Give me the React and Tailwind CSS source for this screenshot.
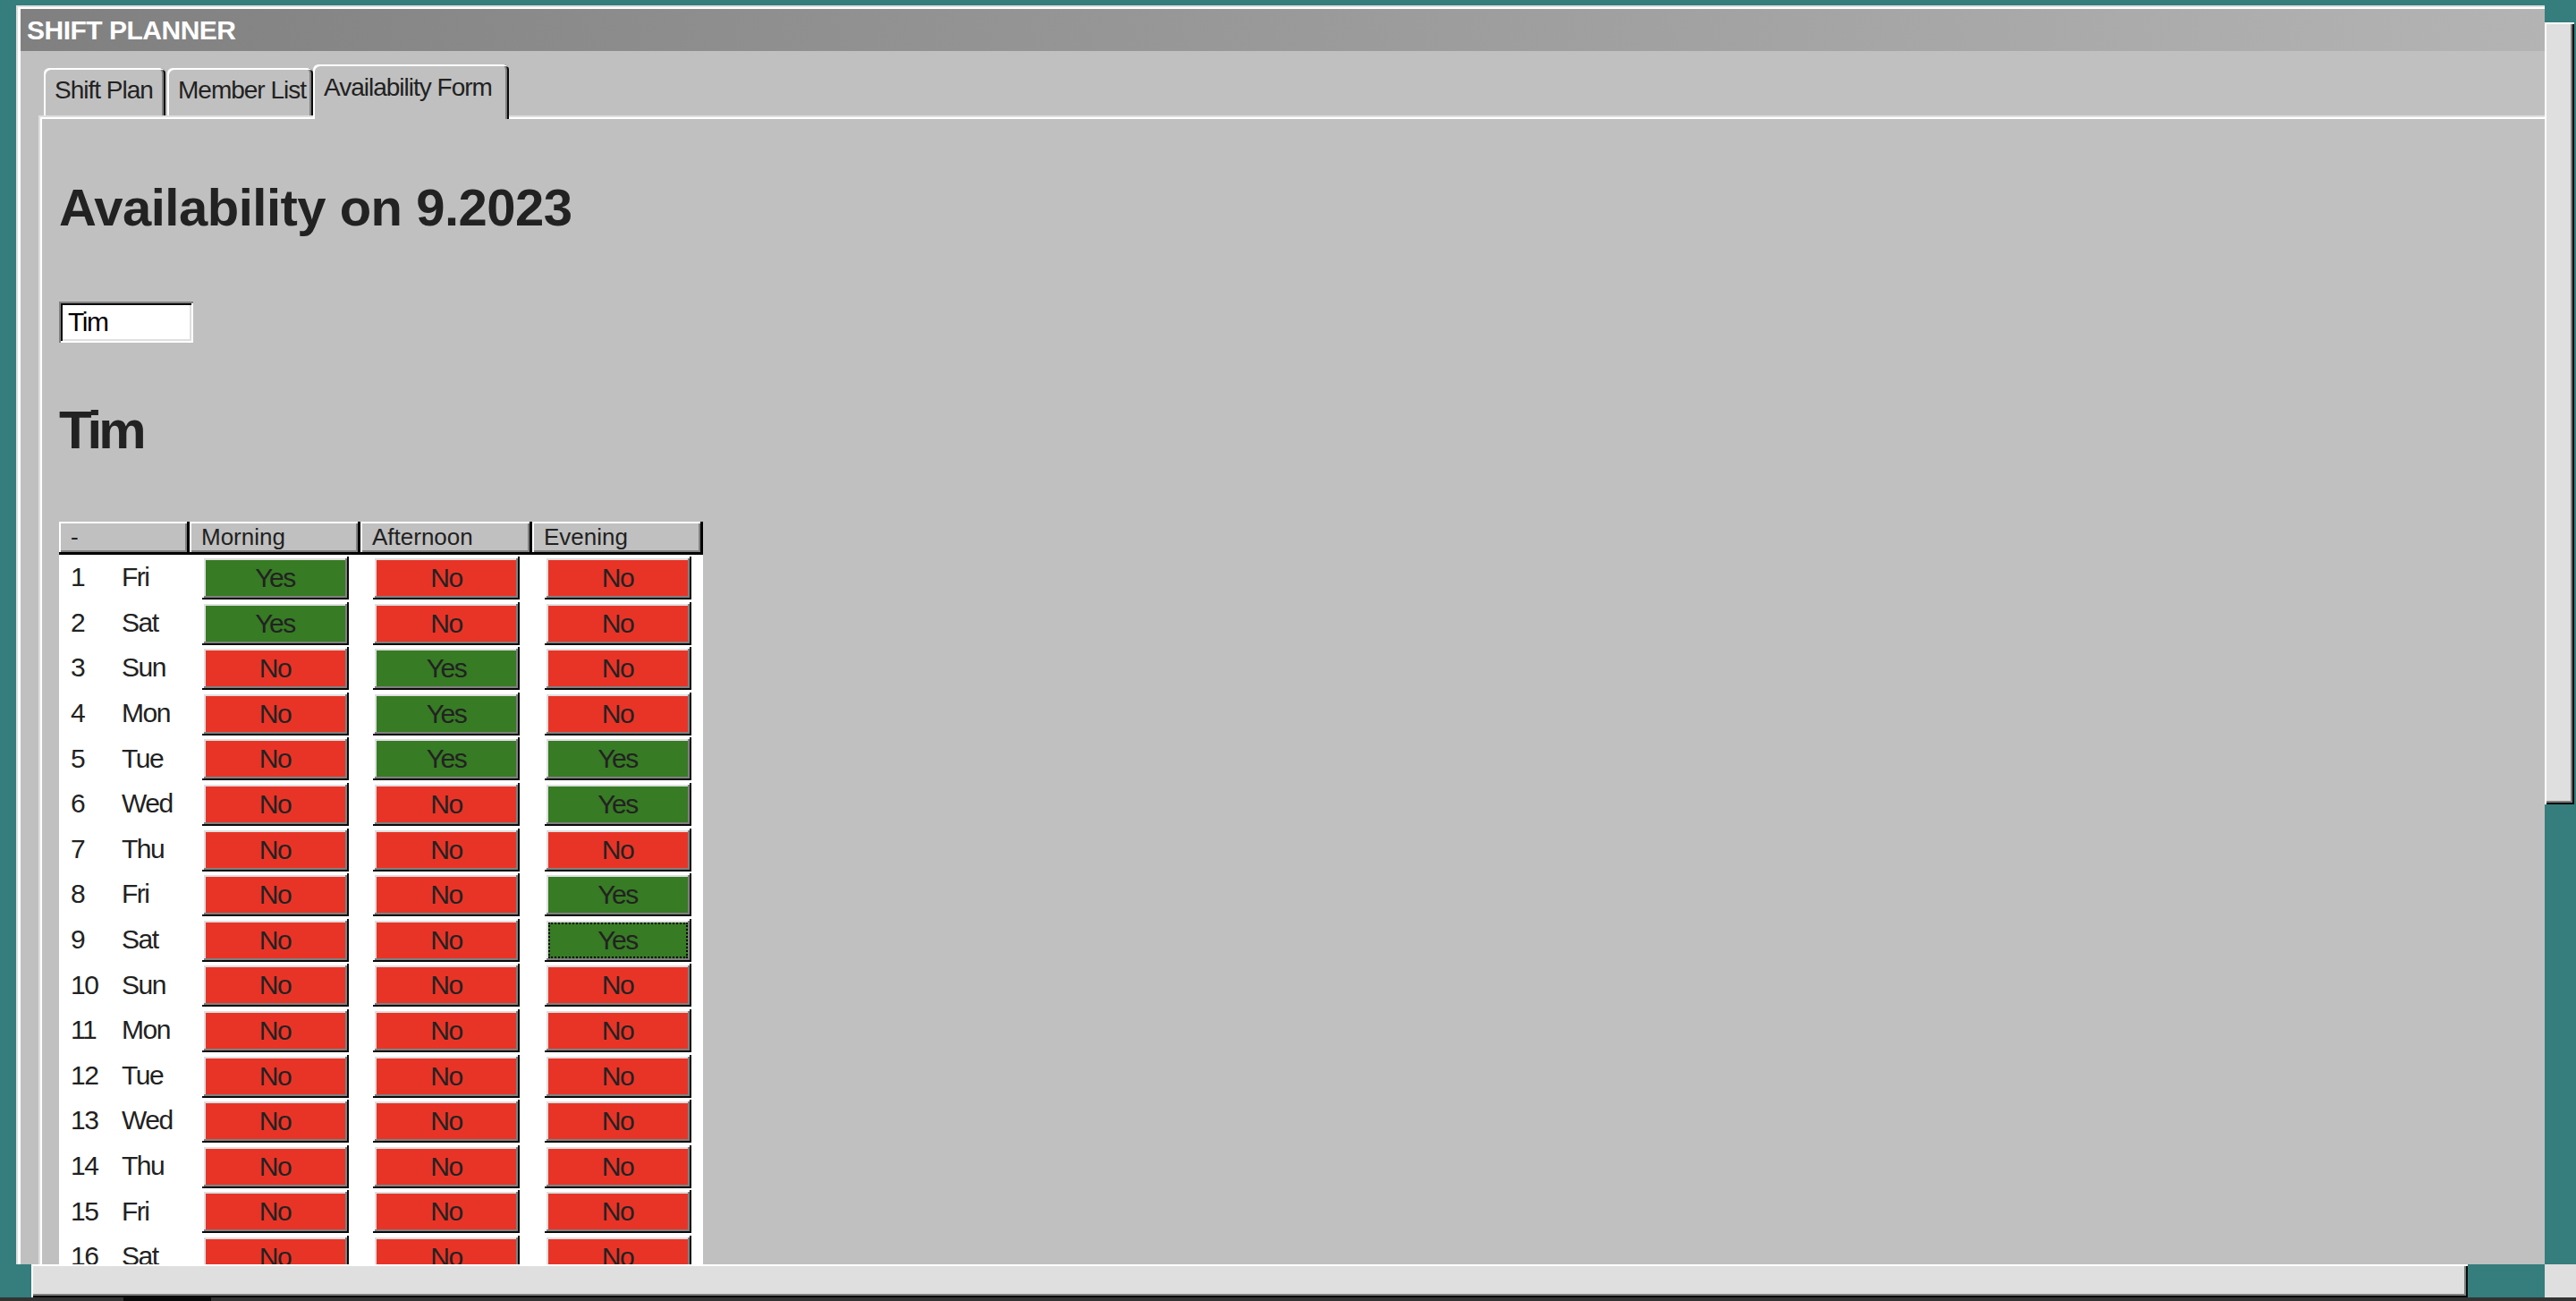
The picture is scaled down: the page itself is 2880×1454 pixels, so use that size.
import { useState } from 'react';

const DAYS = ['Sun', 'Mon', 'Tue', 'Wed', 'Thu', 'Fri', 'Sat'];

// 1 = yes, 0 = no  (morning, afternoon, evening)
const AVAIL = {
  1: [1, 0, 0],
  2: [1, 0, 0],
  3: [0, 1, 0],
  4: [0, 1, 0],
  5: [0, 1, 1],
  6: [0, 0, 1],
  8: [0, 0, 1],
  9: [0, 0, 1],
};

// only the rows that fit in the visible window
const VISIBLE_DAYS = 16;

const bevel =
  'shadow-[inset_-2px_-2px_0_#0a0a0a,inset_2px_2px_0_#fff,inset_-4px_-4px_0_#808080,inset_4px_4px_0_#dfdfdf]';

function SlotButton({ yes, focused, onClick }) {
  return (
    <button
      type="button"
      onClick={onClick}
      className={`flex h-[48px] w-[164px] items-center justify-center text-[30px] leading-none tracking-[-1.5px] text-[#222] ${bevel} ${
        yes ? 'bg-[#377b24]' : 'bg-[#e83427]'
      } ${focused ? 'outline-2 outline-dotted outline-black outline-offset-[-6px]' : 'outline-none'}`}
    >
      {yes ? 'Yes' : 'No'}
    </button>
  );
}

function Tab({ label, active, width }) {
  if (active) {
    return (
      <div
        className={`relative z-10 -mb-[4px] h-[61px] ${width} rounded-t-[6px] bg-[#c0c0c0] pl-[12px] pt-[12px] text-[28px] leading-none tracking-[-1px] shadow-[inset_2px_2px_0_#fff,inset_-2px_0_0_#0a0a0a,inset_-4px_0_0_#808080]`}
      >
        {label}
      </div>
    );
  }
  return (
    <div
      className={`h-[53px] ${width} rounded-t-[6px] bg-[#c0c0c0] pl-[12px] pt-[11px] text-[28px] leading-none tracking-[-1px] shadow-[inset_2px_2px_0_#fff,inset_-2px_0_0_#0a0a0a,inset_-4px_0_0_#808080]`}
    >
      {label}
    </div>
  );
}

function AvailabilityTable() {
  const [slots, setSlots] = useState(() =>
    Array.from({ length: VISIBLE_DAYS }, (_, i) => AVAIL[i + 1] || [0, 0, 0])
  );

  const toggle = (row, col) => {
    setSlots((prev) =>
      prev.map((r, i) => (i === row ? r.map((v, j) => (j === col ? 1 - v : v)) : r))
    );
  };

  const headCell =
    'flex h-[34px] items-center border-r-[3px] border-black bg-[#c0c0c0] pl-[13px] text-[26px] leading-none shadow-[inset_2px_2px_0_#fff,inset_-2px_-2px_0_#808080]';

  return (
    <div className="mt-[72px] w-[720px]">
      {/* Header */}
      <div className="grid grid-cols-[146px_191px_192px_191px] border-b-[3px] border-black">
        <div className={headCell}>-</div>
        <div className={headCell}>Morning</div>
        <div className={headCell}>Afternoon</div>
        <div className={headCell}>Evening</div>
      </div>

      {/* Rows */}
      <div className="bg-white">
        {slots.map((row, i) => (
          <div key={i} className="grid h-[50.6px] grid-cols-[146px_191px_192px_191px]">
            <div className="flex items-center pl-[13px] text-[30px] leading-none tracking-[-1.5px]">
              <span className="w-[57px]">{i + 1}</span>
              <span>{DAYS[(i + 5) % 7]}</span>
            </div>
            {row.map((v, j) => (
              <div key={j} className="flex justify-center pt-[2px]">
                <SlotButton yes={v === 1} focused={i === 8 && j === 2} onClick={() => toggle(i, j)} />
              </div>
            ))}
          </div>
        ))}
      </div>
    </div>
  );
}

export default function App() {
  const [name, setName] = useState('Tim');

  return (
    <div className="flex h-[1454px] w-[2880px] flex-col overflow-hidden bg-[#367d7d] font-['Liberation_Sans',Arial,sans-serif] text-[#222]">
      <div className="flex h-[1413px]">
        {/* Desktop area */}
        <main className="h-full w-[2845px] overflow-hidden pl-[18px] pt-[6px]">
          {/* Window */}
          <div className="w-[2900px] bg-[#c0c0c0] pl-[5px] pt-[4px] shadow-[inset_2px_2px_0_#dfdfdf,inset_5px_4px_0_#fff]">
            {/* Title bar */}
            <div className="flex h-[47px] items-center bg-linear-to-r from-[#808080] to-[#b5b5b5] pl-[7px] text-[30px] font-bold leading-none tracking-[-0.5px] text-white">
              SHIFT PLANNER
            </div>

            <div className="pl-[20px]">
              {/* Tabs */}
              <div className="flex h-[72px] items-end pl-[6px]">
                <Tab label="Shift Plan" width="w-[136px]" />
                <div className="ml-[2px]">
                  <Tab label="Member List" width="w-[163px]" />
                </div>
                <Tab label="Availability Form" width="w-[219px]" active />
              </div>

              {/* Panel */}
              <div className="pl-[4px] pt-[4px] shadow-[inset_2px_2px_0_#dfdfdf,inset_4px_4px_0_#fff]">
                <div className="pb-[40px] pl-[19px]">
                  <h1 className="mt-[70px] text-[58px] font-bold leading-none tracking-[-0.5px]">
                    Availability on 9.2023
                  </h1>

                  <input
                    value={name}
                    onChange={(e) => setName(e.target.value)}
                    className="mt-[76px] block h-[46px] w-[150px] bg-white pl-[10px] text-[30px] leading-none tracking-[-1.5px] text-black outline-none shadow-[inset_2px_2px_0_#808080,inset_-2px_-2px_0_#fff,inset_4px_4px_0_#0a0a0a,inset_-4px_-4px_0_#dfdfdf]"
                  />

                  <h2 className="mt-[68px] text-[60px] font-bold leading-none tracking-[-4px]">{name}</h2>

                  <AvailabilityTable />
                </div>
              </div>
            </div>
          </div>
        </main>

        {/* Vertical scrollbar */}
        <div className="w-[35px] pt-[25px]">
          <div className="h-[874px] w-[33px] bg-[#dfdfdf] shadow-[inset_2px_2px_0_#fff,inset_-2px_-2px_0_#0a0a0a,inset_-4px_-4px_0_#808080]" />
        </div>
      </div>

      {/* Horizontal scrollbar */}
      <div className="flex h-[37px]">
        <div className="w-[2845px] pl-[35px]">
          <div className="h-full w-[2724px] bg-[#dfdfdf] shadow-[inset_2px_2px_0_#fff,inset_-2px_-2px_0_#0a0a0a,inset_-4px_-4px_0_#808080]" />
        </div>
        <div className="flex-1 bg-[#dfdfdf]" />
      </div>

      <div className="flex h-[4px] bg-[#333]">
        <div className="ml-[138px] w-[98px] bg-[#0a0a0a]" />
      </div>
    </div>
  );
}
